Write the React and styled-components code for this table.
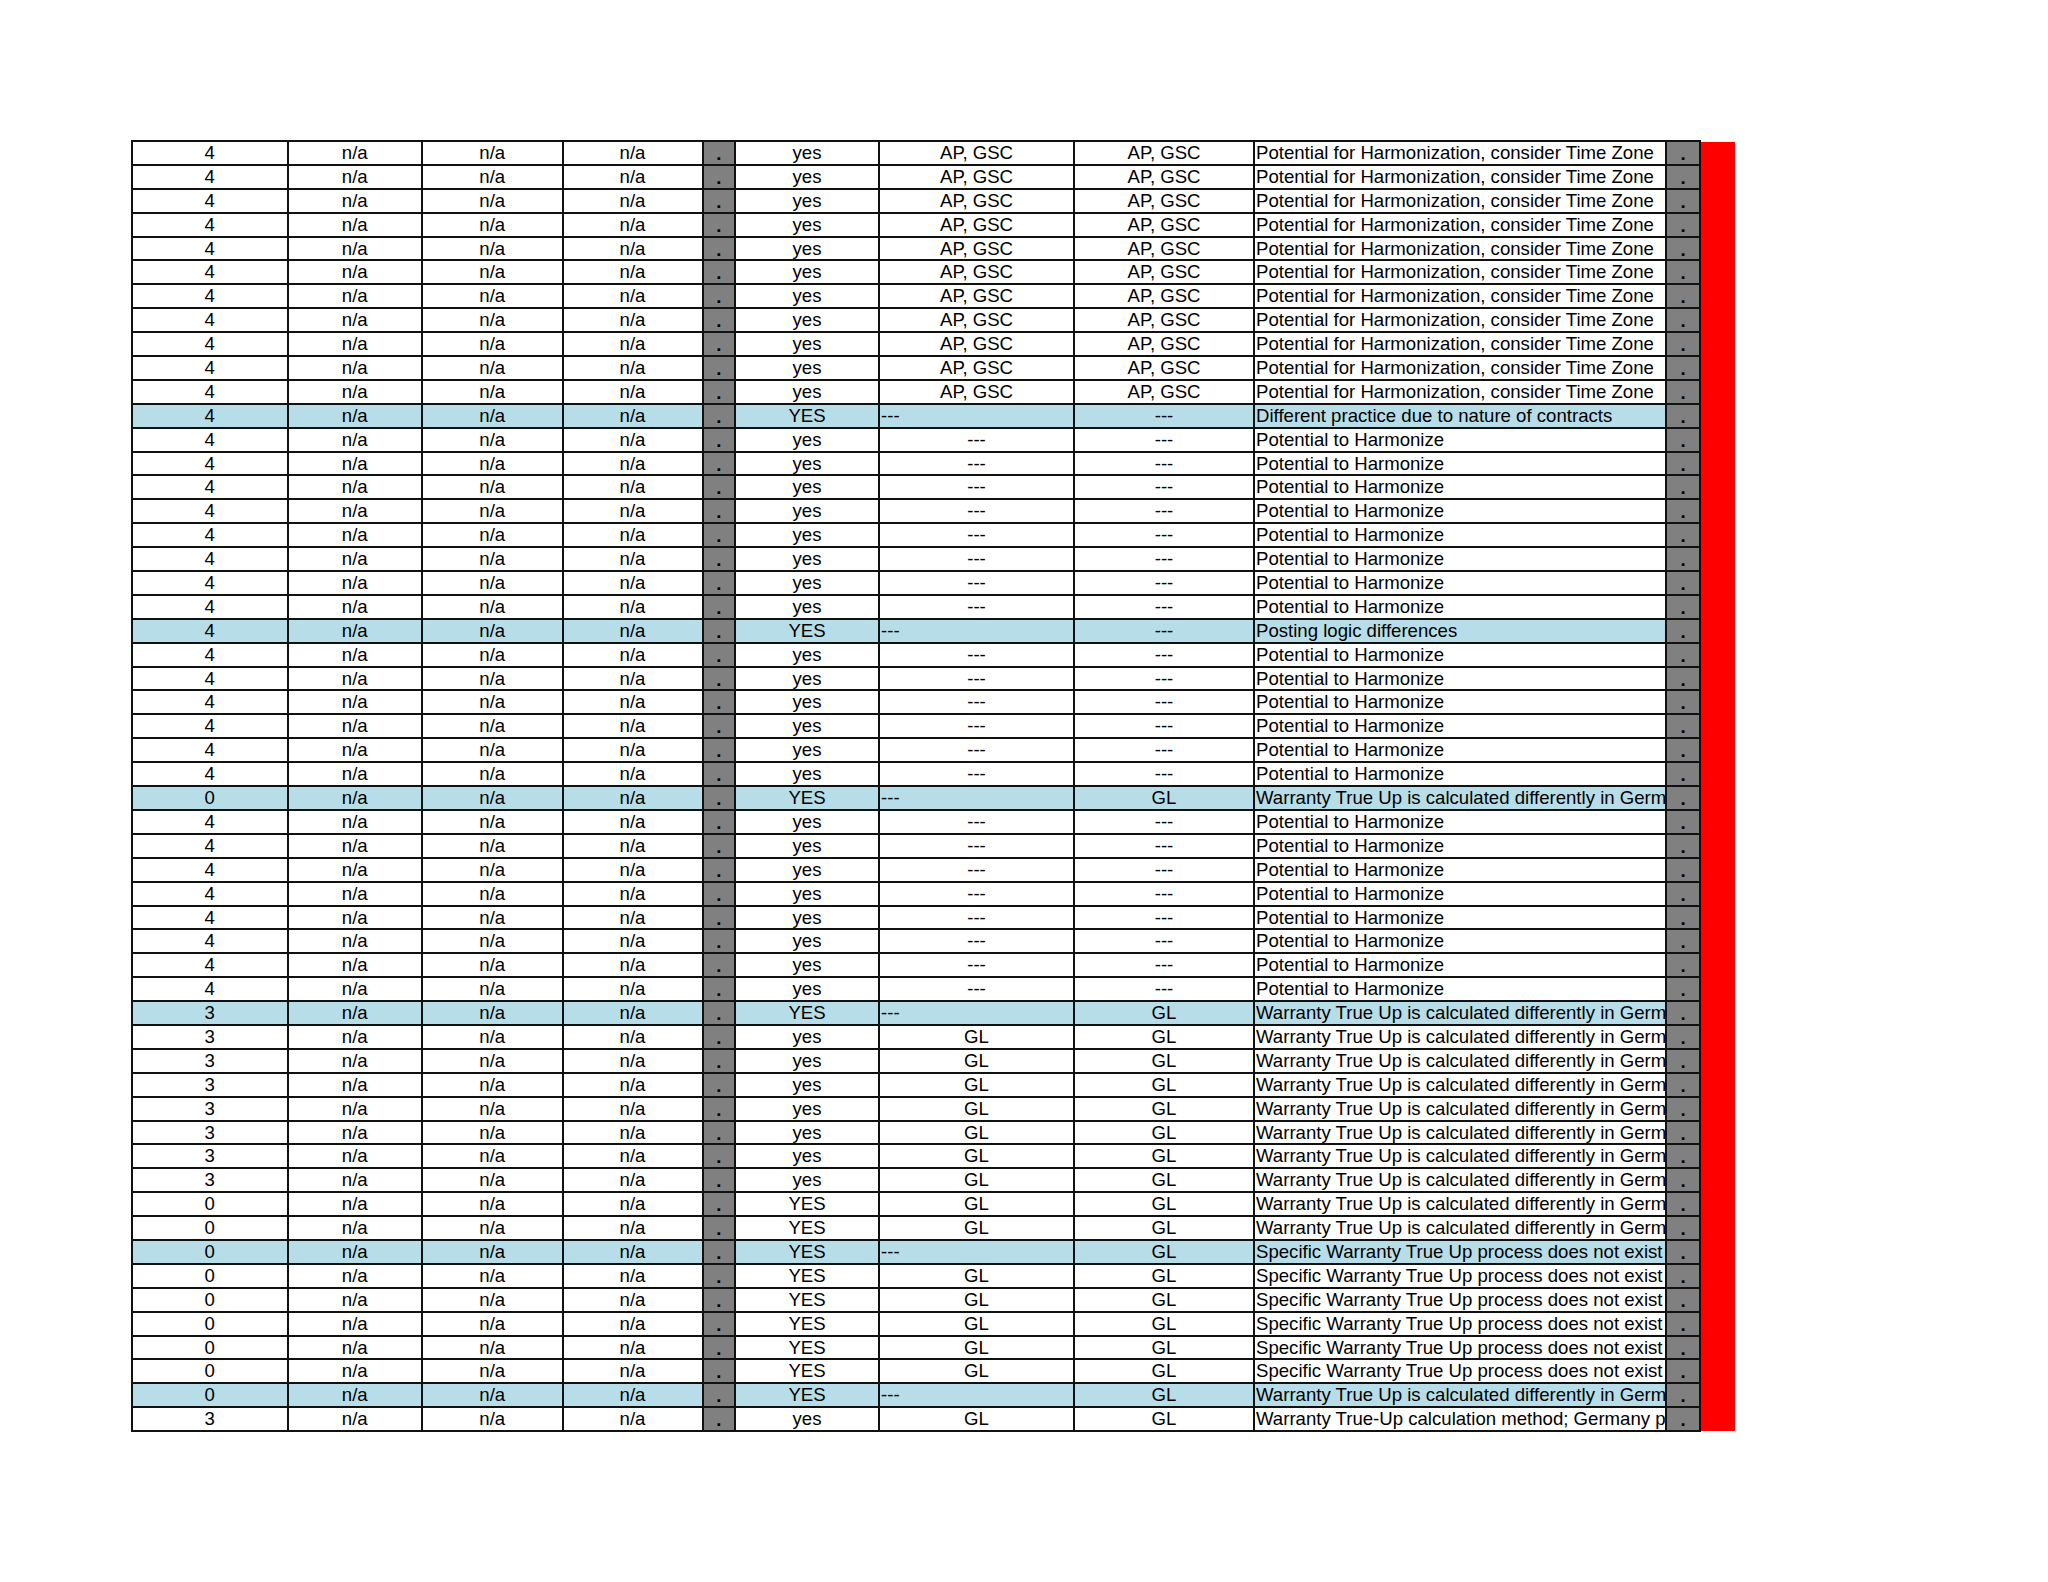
import React from "react";
import styled, { createGlobalStyle } from "styled-components";

const Global = createGlobalStyle`
  html, body { margin: 0; padding: 0; background: #ffffff; }
  body { font-family: "Liberation Sans", Arial, sans-serif; }
`;

const Page = styled.div`
  width: 2048px;
  min-height: 1582px;
  box-sizing: border-box;
  padding: 140px 0 0 131px;
  display: flex;
  align-items: flex-start;
`;

const Sheet = styled.div`
  display: flex;
  align-items: stretch;
`;

const Table = styled.div`
  display: flex;
  flex-direction: column;
  border-left: 2px solid #111;
  border-top: 2px solid #111;
`;

const Row = styled.div`
  display: grid;
  grid-template-columns: 155.5px 134.5px 140.5px 140px 32.5px 144px 195px 180px 412px 34px;
  height: 23.9px;
  background: ${(p) => (p.$hl ? "#b7dde8" : "#ffffff")};
`;

const Cell = styled.div`
  box-sizing: border-box;
  height: 23.9px;
  border-right: 2px solid #111;
  border-bottom: 2px solid #111;
  font-size: 18.6px;
  line-height: 21.9px;
  color: #000;
  white-space: nowrap;
  overflow: hidden;
  text-align: ${(p) => p.$align || "center"};
  padding-left: ${(p) => (p.$align === "left" ? "1px" : "0")};
`;

const GrayCell = styled(Cell)`
  background: #808080;
  font-weight: bold;
  line-height: 24px;
`;

const RedBar = styled.div`
  width: 34px;
  margin: 2px 0 1px 0;
  background: #ff0000;
`;

const HARM = "Potential for Harmonization, consider Time Zone";
const PTH = "Potential to Harmonize";
const WTU = "Warranty True Up is calculated differently in Germany";
const SPEC = "Specific Warranty True Up process does not exist";

const rows = [];
const add = (n, r) => {
  for (let i = 0; i < n; i++) rows.push(r);
};
add(11, { num: "4", yes: "yes", c7: "AP, GSC", c8: "AP, GSC", desc: HARM });
add(1, { hl: true, num: "4", yes: "YES", c7: "---", c8: "---", desc: "Different practice due to nature of contracts" });
add(8, { num: "4", yes: "yes", c7: "---", c8: "---", desc: PTH });
add(1, { hl: true, num: "4", yes: "YES", c7: "---", c8: "---", desc: "Posting logic differences" });
add(6, { num: "4", yes: "yes", c7: "---", c8: "---", desc: PTH });
add(1, { hl: true, num: "0", yes: "YES", c7: "---", c8: "GL", desc: WTU });
add(8, { num: "4", yes: "yes", c7: "---", c8: "---", desc: PTH });
add(1, { hl: true, num: "3", yes: "YES", c7: "---", c8: "GL", desc: WTU });
add(7, { num: "3", yes: "yes", c7: "GL", c8: "GL", desc: WTU });
add(2, { num: "0", yes: "YES", c7: "GL", c8: "GL", desc: WTU });
add(1, { hl: true, num: "0", yes: "YES", c7: "---", c8: "GL", desc: SPEC });
add(5, { num: "0", yes: "YES", c7: "GL", c8: "GL", desc: SPEC });
add(1, { hl: true, num: "0", yes: "YES", c7: "---", c8: "GL", desc: WTU });
add(1, { num: "3", yes: "yes", c7: "GL", c8: "GL", desc: "Warranty True-Up calculation method; Germany provides" });

export default function App() {
  return (
    <>
      <Global />
      <Page>
        <Sheet>
          <Table>
            {rows.map((r, i) => (
              <Row key={i} $hl={r.hl}>
                <Cell>{r.num}</Cell>
                <Cell>n/a</Cell>
                <Cell>n/a</Cell>
                <Cell>n/a</Cell>
                <GrayCell>.</GrayCell>
                <Cell>{r.yes}</Cell>
                <Cell $align={r.hl ? "left" : "center"}>{r.c7}</Cell>
                <Cell>{r.c8}</Cell>
                <Cell $align="left">{r.desc}</Cell>
                <GrayCell>.</GrayCell>
              </Row>
            ))}
          </Table>
          <RedBar />
        </Sheet>
      </Page>
    </>
  );
}
